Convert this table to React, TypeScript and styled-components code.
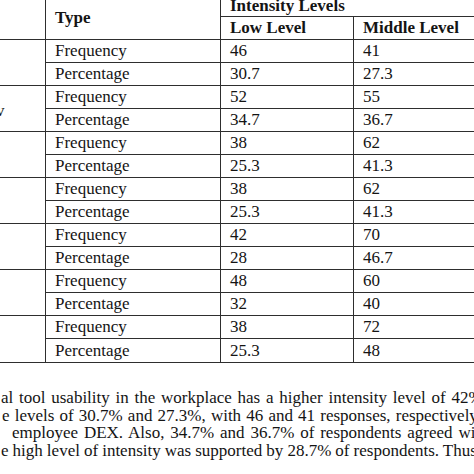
import React from "react";
import styled, { createGlobalStyle } from "styled-components";

const GlobalStyle = createGlobalStyle`
  html, body {
    margin: 0;
    padding: 0;
    background: #fff;
    overflow: hidden;
  }
  body {
    font-family: "Liberation Serif", "Times New Roman", serif;
    color: #141414;
  }
`;

const Page = styled.div`
  width: 474px;
  height: 474px;
  overflow: hidden;
`;

const Grid = styled.div`
  display: grid;
  grid-template-columns: 46px 175px 133px 1fr;
  margin-top: -4px;
  width: 560px;
  font-size: 17px;
  border-bottom: 1px solid #2e2e2e;
`;

const Cell = styled.div<{ $right?: boolean; $bottom?: boolean; $span?: number; $colSpan?: number; $h?: number; $bold?: boolean }>`
  box-sizing: border-box;
  height: ${(p) => p.$h ?? 23}px;
  ${(p) => (p.$span ? `grid-row: span ${p.$span}; height: auto;` : "")}
  ${(p) => (p.$colSpan ? `grid-column: span ${p.$colSpan};` : "")}
  border-right: ${(p) => (p.$right ? "1px solid #2e2e2e" : "none")};
  border-bottom: ${(p) => (p.$bottom ? "1px solid #2e2e2e" : "none")};
  padding-left: 9px;
  display: flex;
  align-items: center;
  font-weight: ${(p) => (p.$bold ? 700 : 400)};
  white-space: nowrap;
  overflow: hidden;
`;

const LabelCell = styled(Cell)`
  padding-left: 0;
`;

const CutGlyph = styled.span`
  margin-left: -4px;
  margin-top: 4px;
`;

const Text = styled.div`
  margin-top: 26px;
  font-size: 17px;
  line-height: 17.6px;
`;

const Line = styled.div<{ $indent: number; $ws: number }>`
  white-space: nowrap;
  padding-left: ${(p) => p.$indent}px;
  word-spacing: ${(p) => p.$ws}px;
`;

const groups = [
  { label: "", rows: [["46", "41"], ["30.7", "27.3"]] },
  { label: "v", rows: [["52", "55"], ["34.7", "36.7"]] },
  { label: "", rows: [["38", "62"], ["25.3", "41.3"]] },
  { label: "", rows: [["38", "62"], ["25.3", "41.3"]] },
  { label: "", rows: [["42", "70"], ["28", "46.7"]] },
  { label: "", rows: [["48", "60"], ["32", "40"]] },
  { label: "", rows: [["38", "72"], ["25.3", "48"]] },
];

const lines = [
  { text: "al tool usability in the workplace has a higher intensity level of 42%", indent: 1, ws: 1.5 },
  { text: "e levels of 30.7% and 27.3%, with 46 and 41 responses, respectively", indent: 2, ws: 0.9 },
  { text: "employee DEX. Also, 34.7% and 36.7% of respondents agreed with", indent: 12, ws: 1.6 },
  { text: "e high level of intensity was supported by 28.7% of respondents. Thus", indent: 1, ws: -0.2 },
];

export default function App() {
  return (
    <Page>
      <GlobalStyle />
      <Grid>
        <LabelCell $span={2} $right $bottom />
        <Cell $span={2} $right $bottom $bold>Type</Cell>
        <Cell $colSpan={2} $h={21} $bottom $bold>Intensity Levels</Cell>
        <Cell $right $bottom $bold>Low Level</Cell>
        <Cell $bottom $bold>Middle Level</Cell>
        {groups.map((g, gi) => (
          <React.Fragment key={gi}>
            <LabelCell $span={2} $right $bottom={gi < groups.length - 1}>
              {g.label && <CutGlyph>{g.label}</CutGlyph>}
            </LabelCell>
            {g.rows.map((r, ri) => (
              <React.Fragment key={ri}>
                <Cell $right $bottom={ri === 0 || gi < groups.length - 1}>
                  {ri === 0 ? "Frequency" : "Percentage"}
                </Cell>
                <Cell $right $bottom={ri === 0 || gi < groups.length - 1}>{r[0]}</Cell>
                <Cell $bottom={ri === 0 || gi < groups.length - 1}>{r[1]}</Cell>
              </React.Fragment>
            ))}
          </React.Fragment>
        ))}
      </Grid>
      <Text>
        {lines.map((l, i) => (
          <Line key={i} $indent={l.indent} $ws={l.ws}>
            {l.text}
          </Line>
        ))}
      </Text>
    </Page>
  );
}
